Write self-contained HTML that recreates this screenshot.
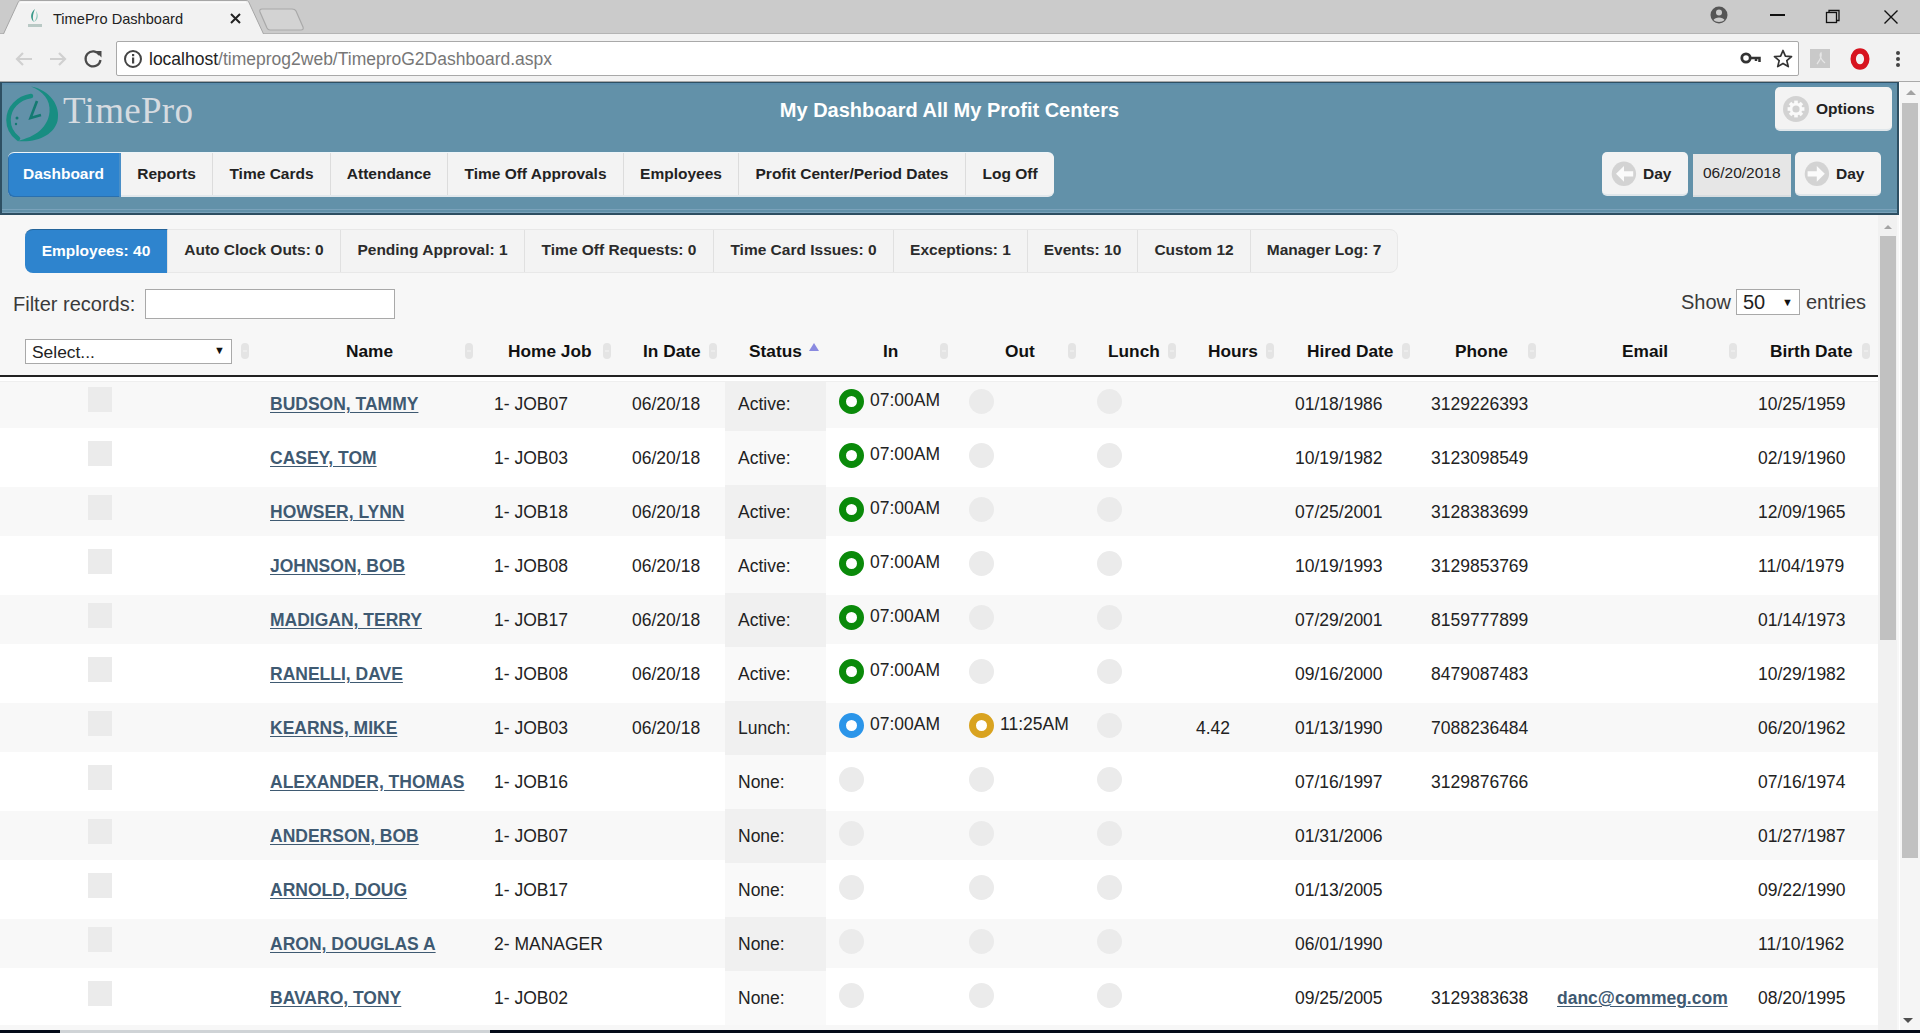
<!DOCTYPE html>
<html><head><meta charset="utf-8">
<style>
*{box-sizing:border-box;margin:0;padding:0}
html,body{width:1920px;height:1033px;overflow:hidden;background:#fff;font-family:"Liberation Sans",sans-serif;position:relative}
.abs{position:absolute}
/* chrome */
#tabstrip{left:0;top:0;width:1920px;height:34px;background:#cbcbcb;border-bottom:1px solid #b4b4b4}
#tab{left:5px;top:2px;width:258px;height:33px;background:#f2f2f2;clip-path:polygon(17px 0,243px 0,258px 33px,0 33px)}
#toolbar{left:0;top:34px;width:1920px;height:48px;background:#f2f2f2;border-bottom:1px solid #a9a9a9}
#omni{left:116px;top:41px;width:1683px;height:35px;background:#fff;border:1px solid #a9a9a9;border-radius:2px}
/* page */
#header{left:0;top:82px;width:1899px;height:133px;background:#6291a9;border:2px solid #2e4f62;border-top:1px solid #2e4f62;box-shadow:inset 0 2px 0 #5b8cab,inset 0 -1px 0 #7aa2ba,inset 0 -3px 0 #6291a9,inset 0 -4px 0 #7aa2ba}
#content{left:0;top:215px;width:1899px;height:818px;background:#f7f7f7}

.nav{left:8px;top:153px;height:44px;display:flex;background:#f3f3f3;border-radius:6px;border-bottom:2px solid #e2e8ec;box-shadow:0 -1px 0 #eef5f9}
.nav div{height:42px;line-height:42px;text-align:center;font-weight:bold;font-size:15.5px;color:#222;border-right:1px solid #dcdcdc}
.nav div:last-child{border-right:none}
.nav .act{background:#2e84ce;color:#fff;border-radius:6px 0 0 6px;border-right:2px solid #4a8fc7;height:44px;margin-bottom:-2px;box-shadow:inset 1px -1px 0 #2a70ae}
.btn{background:#f3f3f3;border-radius:5px;border-bottom:2px solid #dfe6ea;font-weight:bold;font-size:16px;color:#222}

.cnt{left:25px;top:229px;height:44px;display:flex;background:#f3f3f3;border-radius:8px;border:1px solid #e8e8e8}
.cnt div{height:42px;line-height:40px;text-align:center;font-weight:bold;font-size:15.5px;color:#2b2b2b;border-right:1px solid #e0e0e0}
.cnt div:last-child{border-right:none}
.cnt .act{background:#2e84ce;border-top:1px solid #24649a;color:#fff;border-radius:8px 0 0 8px;margin:-1px 0 -1px -1px;height:44px;line-height:42px}
.th{position:absolute;top:341px;font-weight:bold;font-size:17.3px;color:#111}
.sort{position:absolute;top:343px;width:8px;height:16px;border-radius:4px;background:#e4e4e4;filter:blur(0.6px)}
.sort:before{content:"";position:absolute;left:2px;top:7px;width:4px;height:2px;background:#ececec}
.row{position:absolute;left:0;width:1878px;height:54px}
.row span{position:absolute;top:17px;font-size:17.5px;color:#222;white-space:nowrap}
.row .nm{left:270px;font-weight:bold;color:#3f5a72;text-decoration:underline;text-underline-offset:2px}
.row .cb{position:absolute;left:88px;top:10px;width:24px;height:25px;background:#ebebeb}
.row .st{position:absolute;left:725px;top:0;width:101px;height:54px}
.dot{position:absolute;top:12px;width:25px;height:25px;border-radius:50%;background:#ebebeb}
.dot.g{background:#fff;border:7px solid #0a8a0a}
.dot.b{background:#fff;border:7px solid #2b95e9}
.dot.y{background:#fff;border:7px solid #d9a320}
.row .tm{top:13px}
</style></head><body>
<div id="tabstrip" class="abs"></div>
<svg class="abs" style="left:0;top:0" width="280" height="36" viewBox="0 0 280 36"><path d="M3 35 L18.5 1.5 Q19.5 0.5 21 0.5 L246 0.5 Q247.5 0.5 248.5 1.5 L264 35 Z" fill="#f2f2f2" stroke="#a6a6a6" stroke-width="1"/><path d="M20 2.5 L246 2.5" stroke="#fbfbfb" stroke-width="1.5"/><rect x="0" y="34" width="280" height="2" fill="#f2f2f2"/></svg>
<div class="abs" style="left:53px;top:11px;font-size:14.6px;color:#222">TimePro Dashboard</div>
<div id="toolbar" class="abs"></div>
<div id="omni" class="abs"></div>
<div class="abs" style="left:149px;top:49px;font-size:17.5px;color:#222">localhost<span style="color:#777">/timeprog2web/TimeproG2Dashboard.aspx</span></div>

<div id="header" class="abs"></div>
<div id="content" class="abs"></div>

<!-- logo -->
<svg class="abs" style="left:0;top:80px" width="70" height="70" viewBox="0 80 70 70">
 <path d="M31 86.5 C50 90 61 106 57.5 121 C54 134 39 143 17 141 C36 137 48 127 49.5 112 C50.5 100 43 91 31 86.5 Z" fill="#188d82"/>
 <path d="M31 96 C18 98 8.5 108 8.5 120 C8.5 128 12 134 18 138.5" fill="none" stroke="#188d82" stroke-width="4.5" stroke-linecap="round"/>
 <path d="M37 101 L30.5 118 L41 115" fill="none" stroke="#147a72" stroke-width="2.6"/>
 <circle cx="17" cy="118" r="1.5" fill="#147a72"/><circle cx="16" cy="124" r="1.2" fill="#147a72"/>
</svg>
<div class="abs" style="left:63px;top:89px;font-family:'Liberation Serif',serif;font-size:37px;color:#d6dbe0;letter-spacing:0.3px">TimePro</div>
<div class="abs" style="left:0;width:1899px;top:99px;text-align:center;font-weight:bold;font-size:20px;color:#fff">My Dashboard All My Profit Centers</div>
<!-- options -->
<div class="abs btn" style="left:1775px;top:87px;width:117px;height:44px"></div>
<svg class="abs" style="left:1782px;top:95px" width="28" height="28" viewBox="0 0 28 28"><circle cx="14" cy="14" r="13" fill="#d2d2d2"/><g fill="#fafafa"><rect x="12.2" y="5.6" width="3.6" height="3.4" transform="rotate(0 14 14)"/><rect x="12.2" y="5.6" width="3.6" height="3.4" transform="rotate(45 14 14)"/><rect x="12.2" y="5.6" width="3.6" height="3.4" transform="rotate(90 14 14)"/><rect x="12.2" y="5.6" width="3.6" height="3.4" transform="rotate(135 14 14)"/><rect x="12.2" y="5.6" width="3.6" height="3.4" transform="rotate(180 14 14)"/><rect x="12.2" y="5.6" width="3.6" height="3.4" transform="rotate(225 14 14)"/><rect x="12.2" y="5.6" width="3.6" height="3.4" transform="rotate(270 14 14)"/><rect x="12.2" y="5.6" width="3.6" height="3.4" transform="rotate(315 14 14)"/><circle cx="14" cy="14" r="6.3"/></g><circle cx="14" cy="14" r="3.6" fill="#d2d2d2"/></svg>
<div class="abs" style="left:1816px;top:100px;font-weight:bold;font-size:15.5px;color:#222">Options</div>
<!-- nav -->
<div class="abs nav">
 <div class="act" style="width:113px">Dashboard</div>
 <div style="width:92px">Reports</div>
 <div style="width:118px">Time Cards</div>
 <div style="width:117px">Attendance</div>
 <div style="width:176px">Time Off Approvals</div>
 <div style="width:115px">Employees</div>
 <div style="width:227px">Profit Center/Period Dates</div>
 <div style="width:88px">Log Off</div>
</div>
<!-- day buttons -->
<div class="abs btn" style="left:1602px;top:152px;width:86px;height:44px"></div>
<svg class="abs" style="left:1610px;top:160px" width="27" height="27" viewBox="0 0 27 27"><circle cx="13.9" cy="13.8" r="12.2" fill="#d3d3d3"/><path d="M6 13.8 L14 6 L14 11.3 L23.2 11.3 L23.2 16.4 L14 16.4 L14 21.8 Z" fill="#fbfbfb"/></svg>
<div class="abs" style="left:1643px;top:165px;font-weight:bold;font-size:15.5px;color:#222">Day</div>
<div class="abs" style="left:1693px;top:154px;width:98px;height:43px;background:#e6e6e6;border-bottom:2px solid #d8dde0"></div>
<div class="abs" style="left:1703px;top:164px;font-size:15.5px;color:#222">06/20/2018</div>
<div class="abs btn" style="left:1795px;top:152px;width:86px;height:44px"></div>
<svg class="abs" style="left:1803px;top:160px" width="27" height="27" viewBox="0 0 27 27"><circle cx="13.9" cy="13.8" r="12.2" fill="#d3d3d3"/><path d="M21.8 13.8 L13.8 6 L13.8 11.3 L4.6 11.3 L4.6 16.4 L13.8 16.4 L13.8 21.8 Z" fill="#fbfbfb"/></svg>
<div class="abs" style="left:1836px;top:165px;font-weight:bold;font-size:15.5px;color:#222">Day</div>

<!-- counters -->
<div class="abs cnt">
 <div class="act" style="width:143px">Employees: 40</div>
 <div style="width:173px">Auto Clock Outs: 0</div>
 <div style="width:184px">Pending Approval: 1</div>
 <div style="width:189px">Time Off Requests: 0</div>
 <div style="width:180px">Time Card Issues: 0</div>
 <div style="width:134px">Exceptions: 1</div>
 <div style="width:110px">Events: 10</div>
 <div style="width:113px">Custom 12</div>
 <div style="width:146px">Manager Log: 7</div>
</div>
<div class="abs" style="left:13px;top:293px;font-size:20px;color:#3a3a3a">Filter records:</div>
<div class="abs" style="left:145px;top:289px;width:250px;height:30px;background:#fff;border:1px solid #a9a9a9"></div>
<div class="abs" style="left:1681px;top:291px;font-size:20px;color:#3a3a3a">Show</div>
<div class="abs" style="left:1736px;top:289px;width:64px;height:26px;background:#fff;border:1px solid #a9a9a9"></div>
<div class="abs" style="left:1743px;top:291px;font-size:20px;color:#222">50</div>
<div class="abs" style="left:1782px;top:296px;font-size:11px;color:#111">&#9660;</div>
<div class="abs" style="left:1806px;top:291px;font-size:20px;color:#3a3a3a">entries</div>
<!-- table header -->
<div class="abs" style="left:25px;top:339px;width:207px;height:25px;background:#fff;border:1px solid #a9a9a9"></div>
<div class="abs" style="left:32px;top:342px;font-size:17.4px;color:#222">Select...</div>
<div class="abs" style="left:214px;top:344px;font-size:11px;color:#111">&#9660;</div>
<div class="sort" style="left:241px"></div>
<div class="th" style="left:346px">Name</div><div class="sort" style="left:465px"></div>
<div class="th" style="left:508px">Home Job</div><div class="sort" style="left:603px"></div>
<div class="th" style="left:643px">In Date</div><div class="sort" style="left:709px"></div>
<div class="th" style="left:749px">Status</div>
<div class="abs" style="left:809px;top:343px;border-left:5px solid transparent;border-right:5px solid transparent;border-bottom:8px solid #8a8ae0"></div>
<div class="th" style="left:883px">In</div><div class="sort" style="left:940px"></div>
<div class="th" style="left:1005px">Out</div><div class="sort" style="left:1068px"></div>
<div class="th" style="left:1108px">Lunch</div><div class="sort" style="left:1168px"></div>
<div class="th" style="left:1208px">Hours</div><div class="sort" style="left:1266px"></div>
<div class="th" style="left:1307px">Hired Date</div><div class="sort" style="left:1402px"></div>
<div class="th" style="left:1455px">Phone</div><div class="sort" style="left:1528px"></div>
<div class="th" style="left:1622px">Email</div><div class="sort" style="left:1729px"></div>
<div class="th" style="left:1770px">Birth Date</div><div class="sort" style="left:1862px"></div>
<div class="abs" style="left:0;top:375px;width:1878px;height:2px;background:#222"></div><div id="hl" class="abs" style="left:0;top:377px;width:1878px;height:5px;background:#fff;border-bottom:1px solid #efefef;z-index:2"></div>
<div id="rows">
<div class="row" style="top:377px;background:linear-gradient(#fff 0 2px,#f8f8f8 2px 51px,#fff 51px)"><div class="cb"></div><div class="st" style="background:#f0f0f0"></div><span class="nm">BUDSON, TAMMY</span><span style="left:494px">1- JOB07</span><span style="left:632px">06/20/18</span><span style="left:738px">Active:</span><div class="dot g" style="left:839px"></div><span class="tm" style="left:870px">07:00AM</span><div class="dot " style="left:969px"></div><div class="dot" style="left:1097px"></div><span style="left:1295px">01/18/1986</span><span style="left:1431px">3129226393</span><span style="left:1758px">10/25/1959</span></div>
<div class="row" style="top:431px;background:#ffffff"><div class="cb"></div><div class="st" style="background:#f9f9f9"></div><span class="nm">CASEY, TOM</span><span style="left:494px">1- JOB03</span><span style="left:632px">06/20/18</span><span style="left:738px">Active:</span><div class="dot g" style="left:839px"></div><span class="tm" style="left:870px">07:00AM</span><div class="dot " style="left:969px"></div><div class="dot" style="left:1097px"></div><span style="left:1295px">10/19/1982</span><span style="left:1431px">3123098549</span><span style="left:1758px">02/19/1960</span></div>
<div class="row" style="top:485px;background:linear-gradient(#fff 0 2px,#f8f8f8 2px 51px,#fff 51px)"><div class="cb"></div><div class="st" style="background:#f0f0f0"></div><span class="nm">HOWSER, LYNN</span><span style="left:494px">1- JOB18</span><span style="left:632px">06/20/18</span><span style="left:738px">Active:</span><div class="dot g" style="left:839px"></div><span class="tm" style="left:870px">07:00AM</span><div class="dot " style="left:969px"></div><div class="dot" style="left:1097px"></div><span style="left:1295px">07/25/2001</span><span style="left:1431px">3128383699</span><span style="left:1758px">12/09/1965</span></div>
<div class="row" style="top:539px;background:#ffffff"><div class="cb"></div><div class="st" style="background:#f9f9f9"></div><span class="nm">JOHNSON, BOB</span><span style="left:494px">1- JOB08</span><span style="left:632px">06/20/18</span><span style="left:738px">Active:</span><div class="dot g" style="left:839px"></div><span class="tm" style="left:870px">07:00AM</span><div class="dot " style="left:969px"></div><div class="dot" style="left:1097px"></div><span style="left:1295px">10/19/1993</span><span style="left:1431px">3129853769</span><span style="left:1758px">11/04/1979</span></div>
<div class="row" style="top:593px;background:linear-gradient(#fff 0 2px,#f8f8f8 2px 51px,#fff 51px)"><div class="cb"></div><div class="st" style="background:#f0f0f0"></div><span class="nm">MADIGAN, TERRY</span><span style="left:494px">1- JOB17</span><span style="left:632px">06/20/18</span><span style="left:738px">Active:</span><div class="dot g" style="left:839px"></div><span class="tm" style="left:870px">07:00AM</span><div class="dot " style="left:969px"></div><div class="dot" style="left:1097px"></div><span style="left:1295px">07/29/2001</span><span style="left:1431px">8159777899</span><span style="left:1758px">01/14/1973</span></div>
<div class="row" style="top:647px;background:#ffffff"><div class="cb"></div><div class="st" style="background:#f9f9f9"></div><span class="nm">RANELLI, DAVE</span><span style="left:494px">1- JOB08</span><span style="left:632px">06/20/18</span><span style="left:738px">Active:</span><div class="dot g" style="left:839px"></div><span class="tm" style="left:870px">07:00AM</span><div class="dot " style="left:969px"></div><div class="dot" style="left:1097px"></div><span style="left:1295px">09/16/2000</span><span style="left:1431px">8479087483</span><span style="left:1758px">10/29/1982</span></div>
<div class="row" style="top:701px;background:linear-gradient(#fff 0 2px,#f8f8f8 2px 51px,#fff 51px)"><div class="cb"></div><div class="st" style="background:#f0f0f0"></div><span class="nm">KEARNS, MIKE</span><span style="left:494px">1- JOB03</span><span style="left:632px">06/20/18</span><span style="left:738px">Lunch:</span><div class="dot b" style="left:839px"></div><span class="tm" style="left:870px">07:00AM</span><div class="dot y" style="left:969px"></div><span class="tm" style="left:1000px">11:25AM</span><div class="dot" style="left:1097px"></div><span style="left:1196px">4.42</span><span style="left:1295px">01/13/1990</span><span style="left:1431px">7088236484</span><span style="left:1758px">06/20/1962</span></div>
<div class="row" style="top:755px;background:#ffffff"><div class="cb"></div><div class="st" style="background:#f9f9f9"></div><span class="nm">ALEXANDER, THOMAS</span><span style="left:494px">1- JOB16</span><span style="left:738px">None:</span><div class="dot " style="left:839px"></div><div class="dot " style="left:969px"></div><div class="dot" style="left:1097px"></div><span style="left:1295px">07/16/1997</span><span style="left:1431px">3129876766</span><span style="left:1758px">07/16/1974</span></div>
<div class="row" style="top:809px;background:linear-gradient(#fff 0 2px,#f8f8f8 2px 51px,#fff 51px)"><div class="cb"></div><div class="st" style="background:#f0f0f0"></div><span class="nm">ANDERSON, BOB</span><span style="left:494px">1- JOB07</span><span style="left:738px">None:</span><div class="dot " style="left:839px"></div><div class="dot " style="left:969px"></div><div class="dot" style="left:1097px"></div><span style="left:1295px">01/31/2006</span><span style="left:1758px">01/27/1987</span></div>
<div class="row" style="top:863px;background:#ffffff"><div class="cb"></div><div class="st" style="background:#f9f9f9"></div><span class="nm">ARNOLD, DOUG</span><span style="left:494px">1- JOB17</span><span style="left:738px">None:</span><div class="dot " style="left:839px"></div><div class="dot " style="left:969px"></div><div class="dot" style="left:1097px"></div><span style="left:1295px">01/13/2005</span><span style="left:1758px">09/22/1990</span></div>
<div class="row" style="top:917px;background:linear-gradient(#fff 0 2px,#f8f8f8 2px 51px,#fff 51px)"><div class="cb"></div><div class="st" style="background:#f0f0f0"></div><span class="nm">ARON, DOUGLAS A</span><span style="left:494px">2- MANAGER</span><span style="left:738px">None:</span><div class="dot " style="left:839px"></div><div class="dot " style="left:969px"></div><div class="dot" style="left:1097px"></div><span style="left:1295px">06/01/1990</span><span style="left:1758px">11/10/1962</span></div>
<div class="row" style="top:971px;background:#ffffff"><div class="cb"></div><div class="st" style="background:#f9f9f9"></div><span class="nm">BAVARO, TONY</span><span style="left:494px">1- JOB02</span><span style="left:738px">None:</span><div class="dot " style="left:839px"></div><div class="dot " style="left:969px"></div><div class="dot" style="left:1097px"></div><span style="left:1295px">09/25/2005</span><span style="left:1431px">3129383638</span><span class="nm" style="left:1557px;font-weight:bold">danc@commeg.com</span><span style="left:1758px">08/20/1995</span></div>
</div>

<!-- chrome icons -->
<svg class="abs" style="left:24px;top:7px" width="22" height="24" viewBox="0 0 22 24"><path d="M11 2 C6 6 6 12 10 15 C8 11 9 7 11 2Z" fill="#3a9a8a"/><path d="M12 4 C15 8 14 13 10 15 C13 11 13 8 12 4Z" fill="#8cc8bc"/><rect x="4" y="17" width="14" height="3" fill="#b9c9c5"/></svg>
<svg class="abs" style="left:229px;top:12px" width="13" height="13" viewBox="0 0 13 13"><path d="M2 2 L11 11 M11 2 L2 11" stroke="#222" stroke-width="2"/></svg>
<svg class="abs" style="left:258px;top:6px" width="48" height="26" viewBox="0 0 48 26"><path d="M4 3 L34 3 Q37 3 38 5 L45 21 Q46 24 43 24 L12 24 Q10 24 9 22 L2 6 Q1 3 4 3Z" fill="#d3d3d3" stroke="#a9a9a9" stroke-width="1.2"/></svg>
<svg class="abs" style="left:12px;top:48px" width="24" height="22" viewBox="0 0 24 22"><path d="M20 11 H5 M11 5 L5 11 L11 17" fill="none" stroke="#d0d0d0" stroke-width="2.2"/></svg>
<svg class="abs" style="left:46px;top:48px" width="24" height="22" viewBox="0 0 24 22"><path d="M4 11 H19 M13 5 L19 11 L13 17" fill="none" stroke="#d0d0d0" stroke-width="2.2"/></svg>
<svg class="abs" style="left:82px;top:48px" width="22" height="22" viewBox="0 0 22 22"><path d="M17.5 7 A7.5 7.5 0 1 0 18.5 12" fill="none" stroke="#4a4a4a" stroke-width="2.2"/><path d="M13 3 L19.5 3 L19.5 9.5Z" fill="#4a4a4a"/></svg>
<svg class="abs" style="left:123px;top:49px" width="20" height="20" viewBox="0 0 20 20"><circle cx="10" cy="10" r="8" fill="none" stroke="#444" stroke-width="2"/><rect x="9" y="8.5" width="2.2" height="6" fill="#444"/><rect x="9" y="5" width="2.2" height="2.2" fill="#444"/></svg>
<svg class="abs" style="left:1740px;top:50px" width="22" height="16" viewBox="0 0 22 16"><circle cx="6" cy="8" r="4.2" fill="none" stroke="#333" stroke-width="2.8"/><path d="M10 8 H19.5 V12 M16 8 V11" fill="none" stroke="#333" stroke-width="2.5"/></svg>
<svg class="abs" style="left:1772px;top:48px" width="22" height="22" viewBox="0 0 22 22"><path d="M11 2.5 L13.4 8.2 L19.5 8.6 L14.8 12.6 L16.3 18.6 L11 15.4 L5.7 18.6 L7.2 12.6 L2.5 8.6 L8.6 8.2Z" fill="none" stroke="#333" stroke-width="1.7" stroke-linejoin="round"/></svg>
<div class="abs" style="left:1810px;top:49px;width:20px;height:19px;background:#c9c9c9"></div>
<svg class="abs" style="left:1813px;top:51px" width="14" height="15" viewBox="0 0 14 15"><path d="M4 13 C7 9 9 5 8 2 C6 4 8 9 12 12" fill="none" stroke="#e6e6e6" stroke-width="1.3"/></svg>
<svg class="abs" style="left:1849px;top:48px" width="22" height="22" viewBox="0 0 22 22"><ellipse cx="11" cy="11" rx="6.8" ry="8" fill="none" stroke="#d7141f" stroke-width="5.4"/></svg>
<div class="abs" style="left:1896px;top:51px;width:4px;height:4px;border-radius:50%;background:#444;box-shadow:0 6px 0 #444,0 12px 0 #444"></div>
<svg class="abs" style="left:1708px;top:4px" width="22" height="22" viewBox="0 0 22 22"><circle cx="11" cy="11" r="8.5" fill="#555"/><circle cx="11" cy="8.5" r="3" fill="#cbcbcb"/><path d="M5.5 16 C7 12.5 15 12.5 16.5 16 C14 18.5 8 18.5 5.5 16Z" fill="#cbcbcb"/></svg>
<div class="abs" style="left:1770px;top:14px;width:15px;height:1.5px;background:#111"></div>
<svg class="abs" style="left:1825px;top:9px" width="16" height="16" viewBox="0 0 16 16"><rect x="1.5" y="3.5" width="10" height="10" fill="none" stroke="#111" stroke-width="1.3"/><path d="M4 3.5 V1.5 H14 V11.5 H11.5" fill="none" stroke="#111" stroke-width="1.3"/></svg>
<svg class="abs" style="left:1883px;top:9px" width="16" height="16" viewBox="0 0 16 16"><path d="M1.5 1.5 L14.5 14.5 M14.5 1.5 L1.5 14.5" stroke="#111" stroke-width="1.4"/></svg>
<!-- scrollbars -->
<div class="abs" style="left:1899px;top:82px;width:21px;height:951px;background:#f5f5f5;border-left:1px solid #fff"></div>
<div class="abs" style="left:1902px;top:103px;width:16px;height:755px;background:#c1c1c1"></div>
<div class="abs" style="left:1906px;top:90px;border-left:5px solid transparent;border-right:5px solid transparent;border-bottom:5px solid #a3a3a3"></div>
<div class="abs" style="left:1878px;top:215px;width:19px;height:815px;background:#f1f1f1"></div>
<div class="abs" style="left:1880px;top:236px;width:16px;height:404px;background:#c1c1c1"></div>
<div class="abs" style="left:1884px;top:225px;border-left:4px solid transparent;border-right:4px solid transparent;border-bottom:4px solid #a3a3a3"></div>
<div class="abs" style="left:1903px;top:1018px;border-left:5px solid transparent;border-right:5px solid transparent;border-top:5px solid #505050"></div>
<!-- taskbar edge -->
<div class="abs" style="left:0;top:1030px;width:60px;height:3px;background:#030a18"></div>
<div class="abs" style="left:60px;top:1030px;width:430px;height:3px;background:#cfd3d6"></div>
<div class="abs" style="left:490px;top:1030px;width:1430px;height:3px;background:#030a18"></div>
</body></html>
